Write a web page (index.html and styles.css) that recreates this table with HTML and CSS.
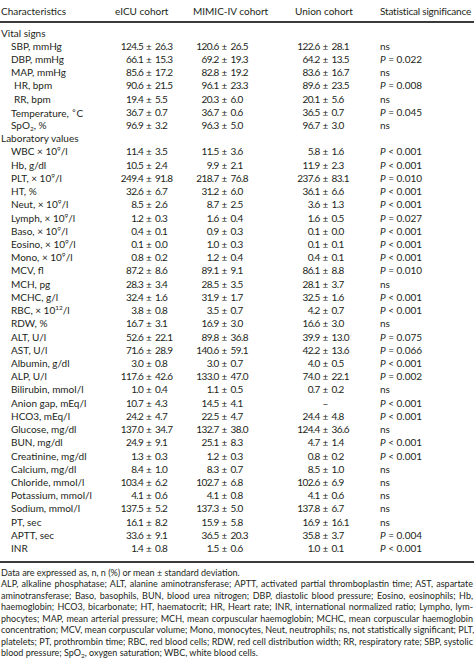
FILE: index.html
```html
<!DOCTYPE html>
<html lang="en">
<head>
<meta charset="utf-8">
<title>Characteristics table</title>
<link rel="stylesheet" href="styles.css">
</head>
<body>
<div class="page">
  <div class="head">
    <div class="h0">Characteristics</div>
    <div>eICU cohort</div>
    <div>MIMIC-IV cohort</div>
    <div>Union cohort</div>
    <div class="hs">Statistical significance</div>
  </div>
  <div class="rule"></div>
  <div class="tbody">
    <div class="sec">Vital signs</div>
    <div class="row"><span class="l">SBP, mmHg</span><span class="a">124.5</span><span class="pm">±</span><span class="b">26.3</span><span class="a">120.6</span><span class="pm">±</span><span class="b">26.5</span><span class="a">122.6</span><span class="pm">±</span><span class="b">28.1</span><span class="s">ns</span></div>
    <div class="row"><span class="l">DBP, mmHg</span><span class="a">66.1</span><span class="pm">±</span><span class="b">15.3</span><span class="a">69.2</span><span class="pm">±</span><span class="b">19.3</span><span class="a">64.2</span><span class="pm">±</span><span class="b">13.5</span><span class="s"><i>P</i> = 0.022</span></div>
    <div class="row"><span class="l">MAP, mmHg</span><span class="a">85.6</span><span class="pm">±</span><span class="b">17.2</span><span class="a">82.8</span><span class="pm">±</span><span class="b">19.2</span><span class="a">83.6</span><span class="pm">±</span><span class="b">16.7</span><span class="s">ns</span></div>
    <div class="row"><span class="l x">HR, bpm</span><span class="a">90.6</span><span class="pm">±</span><span class="b">21.5</span><span class="a">96.1</span><span class="pm">±</span><span class="b">23.3</span><span class="a">89.6</span><span class="pm">±</span><span class="b">23.5</span><span class="s"><i>P</i> = 0.008</span></div>
    <div class="row"><span class="l x">RR, bpm</span><span class="a">19.4</span><span class="pm">±</span><span class="b">5.5</span><span class="a">20.3</span><span class="pm">±</span><span class="b">6.0</span><span class="a">20.1</span><span class="pm">±</span><span class="b">5.6</span><span class="s">ns</span></div>
    <div class="row"><span class="l">Temperature, <span class="deg">°</span>C</span><span class="a">36.7</span><span class="pm">±</span><span class="b">0.7</span><span class="a">36.7</span><span class="pm">±</span><span class="b">0.6</span><span class="a">36.5</span><span class="pm">±</span><span class="b">0.7</span><span class="s"><i>P</i> = 0.045</span></div>
    <div class="row"><span class="l">SpO<sub>2</sub>, %</span><span class="a">96.9</span><span class="pm">±</span><span class="b">3.2</span><span class="a">96.3</span><span class="pm">±</span><span class="b">5.0</span><span class="a">96.7</span><span class="pm">±</span><span class="b">3.0</span><span class="s">ns</span></div>
    <div class="sec">Laboratory values</div>
    <div class="row"><span class="l">WBC × 10<sup>9</sup>/l</span><span class="a">11.4</span><span class="pm">±</span><span class="b">3.5</span><span class="a">11.5</span><span class="pm">±</span><span class="b">3.6</span><span class="a">5.8</span><span class="pm">±</span><span class="b">1.6</span><span class="s"><i>P</i> &lt; 0.001</span></div>
    <div class="row"><span class="l">Hb, g/dl</span><span class="a">10.5</span><span class="pm">±</span><span class="b">2.4</span><span class="a">9.9</span><span class="pm">±</span><span class="b">2.1</span><span class="a">11.9</span><span class="pm">±</span><span class="b">2.3</span><span class="s"><i>P</i> &lt; 0.001</span></div>
    <div class="row"><span class="l">PLT, × 10<sup>9</sup>/l</span><span class="a">249.4</span><span class="pm">±</span><span class="b">91.8</span><span class="a">218.7</span><span class="pm">±</span><span class="b">76.8</span><span class="a">237.6</span><span class="pm">±</span><span class="b">83.1</span><span class="s"><i>P</i> = 0.010</span></div>
    <div class="row"><span class="l">HT, %</span><span class="a">32.6</span><span class="pm">±</span><span class="b">6.7</span><span class="a">31.2</span><span class="pm">±</span><span class="b">6.0</span><span class="a">36.1</span><span class="pm">±</span><span class="b">6.6</span><span class="s"><i>P</i> &lt; 0.001</span></div>
    <div class="row"><span class="l">Neut, × 10<sup>9</sup>/l</span><span class="a">8.5</span><span class="pm">±</span><span class="b">2.6</span><span class="a">8.7</span><span class="pm">±</span><span class="b">2.5</span><span class="a">3.6</span><span class="pm">±</span><span class="b">1.3</span><span class="s"><i>P</i> &lt; 0.001</span></div>
    <div class="row"><span class="l">Lymph, × 10<sup>9</sup>/l</span><span class="a">1.2</span><span class="pm">±</span><span class="b">0.3</span><span class="a">1.6</span><span class="pm">±</span><span class="b">0.4</span><span class="a">1.6</span><span class="pm">±</span><span class="b">0.5</span><span class="s"><i>P</i> = 0.027</span></div>
    <div class="row"><span class="l">Baso, × 10<sup>9</sup>/l</span><span class="a">0.4</span><span class="pm">±</span><span class="b">0.1</span><span class="a">0.9</span><span class="pm">±</span><span class="b">0.3</span><span class="a">0.1</span><span class="pm">±</span><span class="b">0.0</span><span class="s"><i>P</i> &lt; 0.001</span></div>
    <div class="row"><span class="l">Eosino, × 10<sup>9</sup>/l</span><span class="a">0.1</span><span class="pm">±</span><span class="b">0.0</span><span class="a">1.0</span><span class="pm">±</span><span class="b">0.3</span><span class="a">0.1</span><span class="pm">±</span><span class="b">0.1</span><span class="s"><i>P</i> &lt; 0.001</span></div>
    <div class="row"><span class="l">Mono, × 10<sup>9</sup>/l</span><span class="a">0.8</span><span class="pm">±</span><span class="b">0.2</span><span class="a">1.2</span><span class="pm">±</span><span class="b">0.4</span><span class="a">0.4</span><span class="pm">±</span><span class="b">0.1</span><span class="s"><i>P</i> &lt; 0.001</span></div>
    <div class="row"><span class="l">MCV, fl</span><span class="a">87.2</span><span class="pm">±</span><span class="b">8.6</span><span class="a">89.1</span><span class="pm">±</span><span class="b">9.1</span><span class="a">86.1</span><span class="pm">±</span><span class="b">8.8</span><span class="s"><i>P</i> = 0.010</span></div>
    <div class="row"><span class="l">MCH, pg</span><span class="a">28.3</span><span class="pm">±</span><span class="b">3.4</span><span class="a">28.5</span><span class="pm">±</span><span class="b">3.5</span><span class="a">28.1</span><span class="pm">±</span><span class="b">3.7</span><span class="s">ns</span></div>
    <div class="row"><span class="l">MCHC, g/l</span><span class="a">32.4</span><span class="pm">±</span><span class="b">1.6</span><span class="a">31.9</span><span class="pm">±</span><span class="b">1.7</span><span class="a">32.5</span><span class="pm">±</span><span class="b">1.6</span><span class="s"><i>P</i> &lt; 0.001</span></div>
    <div class="row"><span class="l">RBC, × 10<sup>12</sup>/l</span><span class="a">3.8</span><span class="pm">±</span><span class="b">0.8</span><span class="a">3.5</span><span class="pm">±</span><span class="b">0.7</span><span class="a">4.2</span><span class="pm">±</span><span class="b">0.7</span><span class="s"><i>P</i> &lt; 0.001</span></div>
    <div class="row"><span class="l">RDW, %</span><span class="a">16.7</span><span class="pm">±</span><span class="b">3.1</span><span class="a">16.9</span><span class="pm">±</span><span class="b">3.0</span><span class="a">16.6</span><span class="pm">±</span><span class="b">3.0</span><span class="s">ns</span></div>
    <div class="row"><span class="l">ALT, U/l</span><span class="a">52.6</span><span class="pm">±</span><span class="b">22.1</span><span class="a">89.8</span><span class="pm">±</span><span class="b">36.8</span><span class="a">39.9</span><span class="pm">±</span><span class="b">13.0</span><span class="s"><i>P</i> = 0.075</span></div>
    <div class="row"><span class="l">AST, U/l</span><span class="a">71.6</span><span class="pm">±</span><span class="b">28.9</span><span class="a">140.6</span><span class="pm">±</span><span class="b">59.1</span><span class="a">42.2</span><span class="pm">±</span><span class="b">13.6</span><span class="s"><i>P</i> = 0.066</span></div>
    <div class="row"><span class="l">Albumin, g/dl</span><span class="a">3.0</span><span class="pm">±</span><span class="b">0.8</span><span class="a">3.0</span><span class="pm">±</span><span class="b">0.7</span><span class="a">4.0</span><span class="pm">±</span><span class="b">0.5</span><span class="s"><i>P</i> &lt; 0.001</span></div>
    <div class="row"><span class="l">ALP, U/l</span><span class="a">117.6</span><span class="pm">±</span><span class="b">42.6</span><span class="a">133.0</span><span class="pm">±</span><span class="b">47.0</span><span class="a">74.0</span><span class="pm">±</span><span class="b">22.1</span><span class="s"><i>P</i> = 0.002</span></div>
    <div class="row"><span class="l">Bilirubin, mmol/l</span><span class="a">1.0</span><span class="pm">±</span><span class="b">0.4</span><span class="a">1.1</span><span class="pm">±</span><span class="b">0.5</span><span class="a">0.7</span><span class="pm">±</span><span class="b">0.2</span><span class="s">ns</span></div>
    <div class="row"><span class="l">Anion gap, mEq/l</span><span class="a">10.7</span><span class="pm">±</span><span class="b">4.3</span><span class="a">14.5</span><span class="pm">±</span><span class="b">4.1</span><span class="a"></span><span class="pm">–</span><span class="b"></span><span class="s"><i>P</i> &lt; 0.001</span></div>
    <div class="row"><span class="l">HCO3, mEq/l</span><span class="a">24.2</span><span class="pm">±</span><span class="b">4.7</span><span class="a">22.5</span><span class="pm">±</span><span class="b">4.7</span><span class="a">24.4</span><span class="pm">±</span><span class="b">4.8</span><span class="s"><i>P</i> &lt; 0.001</span></div>
    <div class="row"><span class="l">Glucose, mg/dl</span><span class="a">137.0</span><span class="pm">±</span><span class="b">34.7</span><span class="a">132.7</span><span class="pm">±</span><span class="b">38.0</span><span class="a">124.4</span><span class="pm">±</span><span class="b">36.6</span><span class="s">ns</span></div>
    <div class="row"><span class="l">BUN, mg/dl</span><span class="a">24.9</span><span class="pm">±</span><span class="b">9.1</span><span class="a">25.1</span><span class="pm">±</span><span class="b">8.3</span><span class="a">4.7</span><span class="pm">±</span><span class="b">1.4</span><span class="s"><i>P</i> &lt; 0.001</span></div>
    <div class="row"><span class="l">Creatinine, mg/dl</span><span class="a">1.3</span><span class="pm">±</span><span class="b">0.3</span><span class="a">1.2</span><span class="pm">±</span><span class="b">0.3</span><span class="a">0.8</span><span class="pm">±</span><span class="b">0.2</span><span class="s"><i>P</i> &lt; 0.001</span></div>
    <div class="row"><span class="l">Calcium, mg/dl</span><span class="a">8.4</span><span class="pm">±</span><span class="b">1.0</span><span class="a">8.3</span><span class="pm">±</span><span class="b">0.7</span><span class="a">8.5</span><span class="pm">±</span><span class="b">1.0</span><span class="s">ns</span></div>
    <div class="row"><span class="l">Chloride, mmol/l</span><span class="a">103.4</span><span class="pm">±</span><span class="b">6.2</span><span class="a">102.7</span><span class="pm">±</span><span class="b">6.8</span><span class="a">102.6</span><span class="pm">±</span><span class="b">6.9</span><span class="s">ns</span></div>
    <div class="row"><span class="l">Potassium, mmol/l</span><span class="a">4.1</span><span class="pm">±</span><span class="b">0.6</span><span class="a">4.1</span><span class="pm">±</span><span class="b">0.8</span><span class="a">4.1</span><span class="pm">±</span><span class="b">0.6</span><span class="s">ns</span></div>
    <div class="row"><span class="l">Sodium, mmol/l</span><span class="a">137.5</span><span class="pm">±</span><span class="b">5.2</span><span class="a">137.3</span><span class="pm">±</span><span class="b">5.0</span><span class="a">137.8</span><span class="pm">±</span><span class="b">6.7</span><span class="s">ns</span></div>
    <div class="row"><span class="l">PT, sec</span><span class="a">16.1</span><span class="pm">±</span><span class="b">8.2</span><span class="a">15.9</span><span class="pm">±</span><span class="b">5.8</span><span class="a">16.9</span><span class="pm">±</span><span class="b">16.1</span><span class="s">ns</span></div>
    <div class="row"><span class="l">APTT, sec</span><span class="a">33.6</span><span class="pm">±</span><span class="b">9.1</span><span class="a">36.5</span><span class="pm">±</span><span class="b">20.3</span><span class="a">35.8</span><span class="pm">±</span><span class="b">3.7</span><span class="s"><i>P</i> = 0.004</span></div>
    <div class="row"><span class="l">INR</span><span class="a">1.4</span><span class="pm">±</span><span class="b">0.8</span><span class="a">1.5</span><span class="pm">±</span><span class="b">0.6</span><span class="a">1.0</span><span class="pm">±</span><span class="b">0.1</span><span class="s"><i>P</i> &lt; 0.001</span></div>
  </div>
  <div class="rule rule-bottom"></div>
  <div class="notes">
    <div class="note-first">Data are expressed as, n, n (%) or mean ± standard deviation.</div>
    <div class="jl">ALP, alkaline phosphatase; ALT, alanine aminotransferase; APTT, activated partial thromboplastin time; AST, aspartate</div>
    <div class="jl">aminotransferase; Baso, basophils, BUN, blood urea nitrogen; DBP, diastolic blood pressure; Eosino, eosinophils; Hb,</div>
    <div class="jl">haemoglobin; HCO3, bicarbonate; HT, haematocrit; HR, Heart rate; INR, international normalized ratio; Lympho, lym-</div>
    <div class="jl">phocytes; MAP, mean arterial pressure; MCH, mean corpuscular haemoglobin; MCHC, mean corpuscular haemoglobin</div>
    <div class="jl">concentration; MCV, mean corpuscular volume; Mono, monocytes, Neut, neutrophils; ns, not statistically significant; PLT,</div>
    <div class="jl">platelets; PT, prothrombin time; RBC, red blood cells; RDW, red cell distribution width; RR, respiratory rate; SBP, systolic</div>
    <div class="last">blood pressure; SpO<sub>2</sub>, oxygen saturation; WBC, white blood cells.</div>
  </div>
</div>
</body>
</html>
```

FILE: styles.css
```css
html, body {
  margin: 0;
  padding: 0;
  background: #ffffff;
}

body {
  font-family: "Lato", "Liberation Sans", sans-serif;
  color: #231f20;
  font-size: 10px;
  width: 474px;
  overflow: hidden;
}

.page {
  padding-top: 4px;
}

.head {
  display: grid;
  grid-template-columns: 115px 78px 102px 85px 1fr;
  height: 14px;
  line-height: 14px;
  white-space: nowrap;
}

.h0 {
  padding-left: 1px;
}

.hs {
  letter-spacing: -0.2px;
}

.rule {
  margin-top: 3px;
  height: 1.5px;
  background: #3a3a3a;
}

.tbody {
  padding-top: 4px;
}

.sec {
  height: 13.23px;
  line-height: 13.23px;
  padding-left: 1px;
  white-space: nowrap;
}

.row {
  display: grid;
  grid-template-columns: 110px 34.5px 9px 31.5px 35px 9px 57px 35px 9px 50px 1fr;
  height: 13.23px;
  line-height: 13.23px;
  white-space: nowrap;
}

.l {
  padding-left: 11px;
}

.l.x {
  padding-left: 14px;
}

.a {
  text-align: right;
  letter-spacing: -0.6px;
  padding-right: 1.2px;
}

.b {
  text-align: left;
  letter-spacing: -0.6px;
  padding-left: 1.5px;
}

.pm {
  text-align: center;
}

.s i {
  font-style: italic;
}

.deg {
  font-size: 8px;
  vertical-align: 2px;
  padding: 0 1px;
}

sup {
  font-size: 6.5px;
  line-height: 0;
  vertical-align: 4px;
}

sub {
  font-size: 6.5px;
  line-height: 0;
  vertical-align: -1.5px;
}

.rule-bottom {
  margin-top: 6px;
}

.notes {
  padding-top: 4px;
  padding-left: 1px;
  padding-right: 1px;
  font-size: 9px;
  line-height: 11.5px;
}

.note-first {
  white-space: nowrap;
}

.jl {
  text-align: justify;
  text-align-last: justify;
  white-space: nowrap;
}

.last {
  white-space: nowrap;
}
```
